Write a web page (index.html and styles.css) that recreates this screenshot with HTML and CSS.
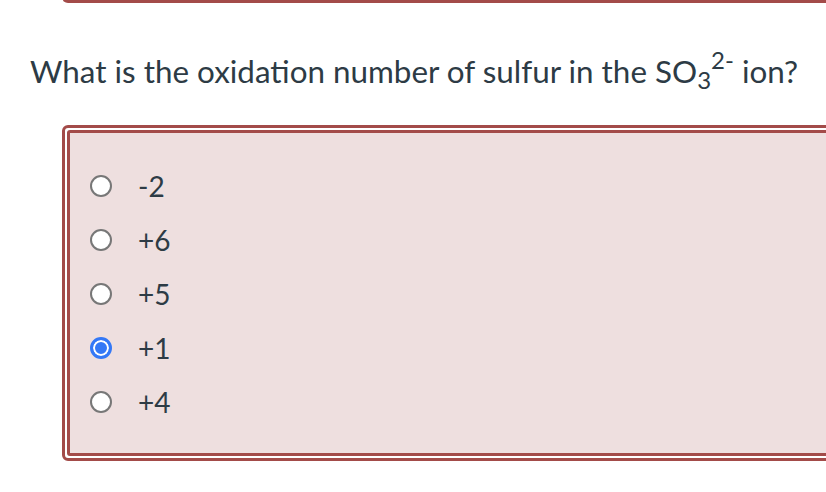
FILE: index.html
```html
<!DOCTYPE html>
<html lang="en">
<head>
    <meta charset="UTF-8">
    <meta name="viewport" content="width=device-width, initial-scale=1.0">
    <title>Quiz Question</title>
    <link rel="stylesheet" href="styles.css">
</head>
<body>
    <div class="prev-answers"></div>

    <main class="question">
        <p class="question-text">What is the oxidation number of sulfur in the SO<sub>3</sub><sup>2-</sup> ion?</p>

        <div class="answers-outer">
            <form class="answers">
                <label class="answer">
                    <input type="radio" name="answer" value="-2">
                    <span class="answer-text">-2</span>
                </label>
                <label class="answer">
                    <input type="radio" name="answer" value="+6">
                    <span class="answer-text">+6</span>
                </label>
                <label class="answer">
                    <input type="radio" name="answer" value="+5">
                    <span class="answer-text">+5</span>
                </label>
                <label class="answer">
                    <input type="radio" name="answer" value="+1" checked>
                    <span class="answer-text">+1</span>
                </label>
                <label class="answer">
                    <input type="radio" name="answer" value="+4">
                    <span class="answer-text">+4</span>
                </label>
            </form>
        </div>
    </main>
</body>
</html>
```

FILE: styles.css
```css
body {
    font-family: Lato, "Open Sans", sans-serif;
    color: #2d3b45;
    background-color: #fff;
    margin: 0;
    padding: 0;
    overflow: hidden;
}

.prev-answers {
    height: 3px;
    margin-left: 62px;
    border-left: 3px solid #a34b49;
    border-bottom: 3px solid #a34b49;
    border-bottom-left-radius: 6px;
    margin-top: -3px;
}

.question {
    padding-left: 30px;
}

.question-text {
    font-size: 31.4px;
    margin: 46px 0 0 0;
    line-height: 44px;
    white-space: nowrap;
}

.question-text sub,
.question-text sup {
    font-size: 24px;
    line-height: 0;
    position: relative;
    vertical-align: baseline;
}

.question-text sub {
    top: 6px;
}

.question-text sup {
    top: -14px;
}

.answers-outer {
    margin: 32px -40px 0 32px;
    border: 3px solid #a34b49;
    border-radius: 6px;
    padding: 2px;
    background-color: #fff;
}

.answers {
    background-color: #eedfdf;
    border: 3px solid #a34b49;
    border-radius: 3px;
    padding: 40px 0 38px 20px;
    display: flex;
    flex-direction: column;
    gap: 28px;
    margin: 0;
}

.answer {
    display: flex;
    align-items: center;
    height: 26px;
    font-size: 28px;
}

.answer input {
    appearance: none;
    -webkit-appearance: none;
    width: 22px;
    height: 22px;
    margin: 0 26px 0 0;
    border: 2px solid #777;
    border-radius: 50%;
    background-color: #fff;
    box-sizing: border-box;
}

.answer input:checked {
    border: 3px solid #3478f6;
    box-shadow: inset 0 0 0 2px #fff;
    background-color: #3478f6;
}
```
